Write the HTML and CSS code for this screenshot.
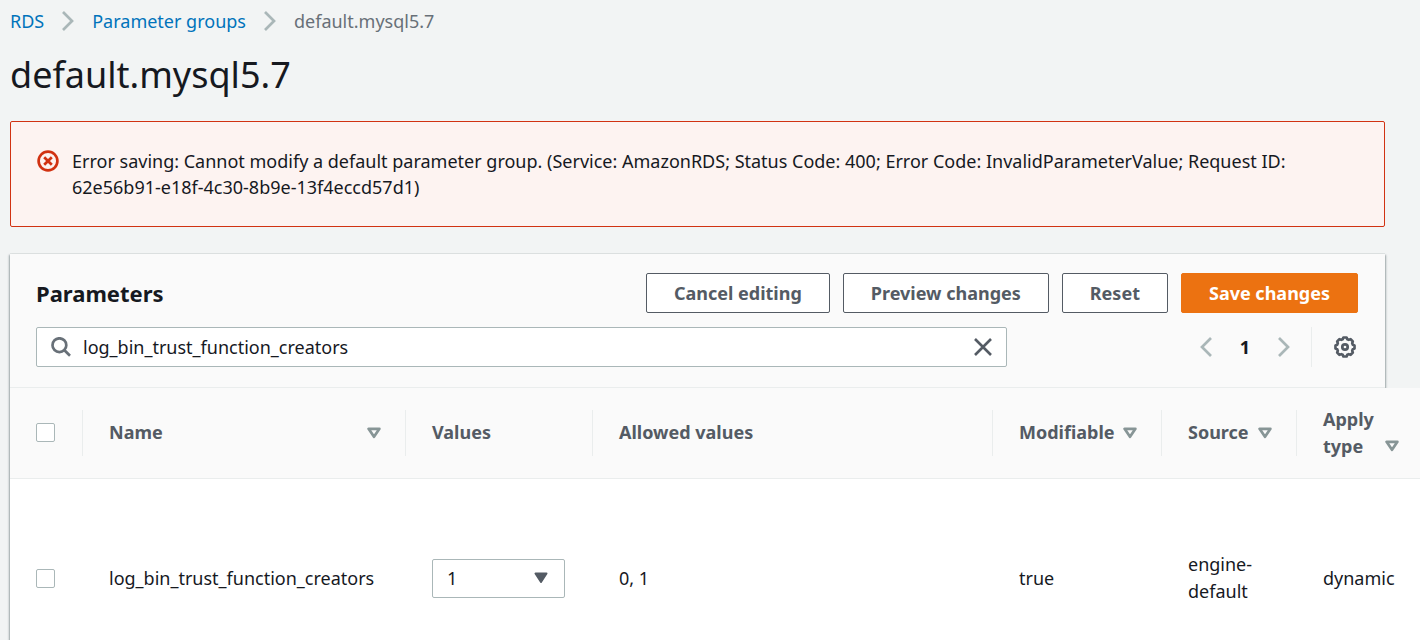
FILE: index.html
```html
<!DOCTYPE html>
<html lang="en">
<head>
<meta charset="utf-8">
<meta name="viewport" content="width=device-width, initial-scale=1">
<title>default.mysql5.7 - RDS parameter group</title>
<link rel="stylesheet" href="styles.css">
</head>
<body>
<svg class="sprite" aria-hidden="true">
  <symbol id="i-chevron" viewBox="0 0 14 22"><path d="M2 2 L11 11 L2 20" fill="none" stroke="currentColor" stroke-width="2.7"/></symbol>
  <symbol id="i-sort" viewBox="0 0 14 12"><path d="M1.6 1.8 H12.4 L7 9.8 Z" fill="none" stroke="currentColor" stroke-width="2.7" stroke-linejoin="round"/></symbol>
</svg>
<main class="page">
  <nav class="crumbs" aria-label="Breadcrumbs">
    <a class="crumb-link" href="#">RDS</a>
    <svg class="crumb-sep"><use href="#i-chevron"/></svg>
    <a class="crumb-link" href="#">Parameter groups</a>
    <svg class="crumb-sep"><use href="#i-chevron"/></svg>
    <span class="crumb-current">default.mysql5.7</span>
  </nav>
  <h1 class="title">default.mysql5.7</h1>

  <div class="alert" role="alert">
    <svg class="alert-icon" viewBox="0 0 22 22" fill="none" stroke="currentColor" stroke-width="2.7"><circle cx="11" cy="11" r="9.4"/><path d="M7.2 7.2 L14.8 14.8 M14.8 7.2 L7.2 14.8"/></svg>
    <p class="alert-text">Error saving: Cannot modify a default parameter group. (Service: AmazonRDS; Status Code: 400; Error Code: InvalidParameterValue; Request ID: 62e56b91-e18f-4c30-8b9e-13f4eccd57d1)</p>
  </div>

  <section class="panel">
    <header class="panel-head">
      <div class="head-row">
        <h2 class="panel-title">Parameters</h2>
        <div class="actions">
          <button class="btn" type="button">Cancel editing</button>
          <button class="btn" type="button">Preview changes</button>
          <button class="btn" type="button">Reset</button>
          <button class="btn btn-primary" type="button">Save changes</button>
        </div>
      </div>
      <div class="tools">
        <div class="search">
          <svg class="search-icon" viewBox="0 0 20 20" fill="none" stroke="currentColor" stroke-width="2.7"><circle cx="8.4" cy="8.2" r="6.9"/><path d="M13.2 13 L19 18.8"/></svg>
          <input class="search-input" type="text" aria-label="Filter parameters" value="log_bin_trust_function_creators">
          <button class="icon-btn" type="button" aria-label="Clear filter"><svg class="clear-icon" viewBox="0 0 18 18" fill="none" stroke="currentColor" stroke-width="2.6"><path d="M1 1 L17 17 M17 1 L1 17"/></svg></button>
        </div>
        <div class="pager">
          <button class="icon-btn page-arrow" type="button" aria-label="Previous page"><svg class="pager-icon flip"><use href="#i-chevron"/></svg></button>
          <button class="icon-btn page-num" type="button">1</button>
          <button class="icon-btn page-arrow" type="button" aria-label="Next page"><svg class="pager-icon"><use href="#i-chevron"/></svg></button>
        </div>
        <div class="prefs">
          <button class="icon-btn" type="button" aria-label="Preferences"><svg class="gear-icon" viewBox="0 0 22 22" fill="none" stroke="currentColor" stroke-width="2.7" stroke-linejoin="round"><path d="M9.4 1.5 H12.6 L13.3 3.2 L14.7 3.8 L16.6 3.2 L18.8 5.4 L18.2 7.3 L18.8 8.7 L20.5 9.4 V12.6 L18.8 13.3 L18.2 14.7 L18.8 16.6 L16.6 18.8 L14.7 18.2 L13.3 18.8 L12.6 20.5 H9.4 L8.7 18.8 L7.3 18.2 L5.4 18.8 L3.2 16.6 L3.8 14.7 L3.2 13.3 L1.5 12.6 V9.4 L3.2 8.7 L3.8 7.3 L3.2 5.4 L5.4 3.2 L7.3 3.8 L8.7 3.2 Z"/><circle cx="11" cy="11" r="2.7"/></svg></button>
        </div>
      </div>
    </header>
    <div class="table-wrap">
      <table class="params">
        <colgroup>
          <col class="c-check"><col class="c-name"><col class="c-values"><col class="c-allowed"><col class="c-mod"><col class="c-source"><col class="c-apply">
        </colgroup>
        <thead>
          <tr>
            <th scope="col"><div class="th check-cell"><input class="check" type="checkbox" aria-label="Select all parameters"></div></th>
            <th scope="col"><div class="th th-line spread">Name <svg class="sort"><use href="#i-sort"/></svg></div></th>
            <th scope="col"><div class="th th-line">Values</div></th>
            <th scope="col"><div class="th th-line">Allowed values</div></th>
            <th scope="col"><div class="th th-line spread">Modifiable <svg class="sort"><use href="#i-sort"/></svg></div></th>
            <th scope="col"><div class="th th-line spread">Source <svg class="sort"><use href="#i-sort"/></svg></div></th>
            <th scope="col"><div class="th th-line spread wrapped"><span>Apply type</span> <svg class="sort"><use href="#i-sort"/></svg></div></th>
          </tr>
        </thead>
        <tbody>
          <tr>
            <td class="td check-cell"><input class="check" type="checkbox" aria-label="Select log_bin_trust_function_creators"></td>
            <td class="td">log_bin_trust_function_creators</td>
            <td class="td"><select class="select" aria-label="Value"><option>1</option><option>0</option></select></td>
            <td class="td">0, 1</td>
            <td class="td">true</td>
            <td class="td">engine-default</td>
            <td class="td">dynamic</td>
          </tr>
        </tbody>
      </table>
    </div>
  </section>
</main>
</body>
</html>
```
FILE: styles.css
```css
* { box-sizing: border-box; }

body {
  margin: 0;
  min-height: 100vh;
  overflow-x: hidden;
  background: #f2f4f4;
  color: #16191f;
  font-family: "Noto Sans", "Open Sans", sans-serif;
  font-size: 18px;
  line-height: 26px;
}

button, input, select { font: inherit; color: inherit; }

.sprite { display: none; }

.page { padding: 8px 35px 0 10px; }

.crumbs { display: flex; align-items: center; }
.crumb-link { color: #0073bb; text-decoration: none; }
.crumb-sep { width: 14px; height: 22px; margin: 0 17px; color: #aab7b8; }
.crumb-current { color: #687078; }

.title {
  margin: 17px 0 22px;
  font-size: 36px;
  font-weight: 400;
  line-height: 48px;
}

.alert {
  display: flex;
  gap: 13px;
  padding: 26px 80px 26px 26px;
  border: 1px solid #d13212;
  border-radius: 2px;
  background: #fdf3f1;
}
.alert-icon { flex: none; width: 22px; height: 22px; margin-top: 2px; color: #d13212; }
.alert-text { margin: 0; }

.panel {
  margin-top: 27px;
  background: #fff;
  box-shadow: 0 1px 1px 0 rgba(0, 28, 36, .3), 1px 1px 2px 0 rgba(0, 28, 36, .3), -1px 1px 2px 0 rgba(0, 28, 36, .3), 0 -1px 0 0 #e5e9e9;
}
.panel-head {
  padding: 19px 27px 20px 26px;
  border-bottom: 1px solid #eaeded;
  background: #fafafa;
}
.head-row { display: flex; align-items: center; justify-content: space-between; }
.panel-title { margin: 0; font-size: 22px; line-height: 30px; font-weight: 700; }

.actions { display: flex; gap: 13px; }
.btn {
  height: 40px;
  padding: 0 27px;
  border: 1px solid #545b64;
  border-radius: 2px;
  background: #fff;
  color: #545b64;
  font-weight: 700;
}
.btn-primary { border-color: #ec7211; background: #ec7211; color: #fff; }

.tools { display: flex; align-items: center; margin-top: 14px; }
.search {
  flex: 1;
  display: flex;
  align-items: center;
  gap: 12px;
  height: 40px;
  padding: 0 14px;
  border: 1px solid #aab7b8;
  border-radius: 2px;
  background: #fff;
}
.search-icon { flex: none; width: 20px; height: 20px; color: #687078; }
.search-input {
  flex: 1;
  min-width: 0;
  padding: 0;
  border: 0;
  outline: 0;
  background: transparent;
}
.icon-btn {
  display: flex;
  align-items: center;
  justify-content: center;
  padding: 0;
  border: 0;
  background: none;
  color: #545b64;
}
.clear-icon { width: 18px; height: 18px; }

.pager { display: flex; align-items: center; gap: 27px; margin: 0 20px 0 192px; }
.page-arrow { color: #aab7b8; }
.pager-icon { width: 14px; height: 22px; }
.flip { transform: rotate(180deg); }
.page-num { color: #16191f; font-weight: 700; }
.prefs {
  display: flex;
  align-items: center;
  height: 40px;
  padding: 0 2px 0 22px;
  border-left: 1px solid #eaeded;
}
.gear-icon { width: 22px; height: 22px; }

.table-wrap { margin-right: -35px; background: #fff; }
.params { width: 100%; border-collapse: collapse; table-layout: fixed; line-height: 27px; }
.c-check { width: 72px; }
.c-name { width: 323px; }
.c-values { width: 187px; }
.c-mod { width: 169px; }
.c-source { width: 135px; }
.c-apply { width: 124px; }

th {
  padding: 0;
  height: 90px;
  border-bottom: 1px solid #eaeded;
  background: #fafafa;
  color: #545b64;
  font-weight: 700;
  text-align: left;
}
.th { display: flex; align-items: center; height: 46px; padding: 0 26px; }
.th-line { border-left: 1px solid #eaeded; }
.spread { justify-content: space-between; padding-right: 24px; }
.wrapped { padding-right: 21px; }
.sort { flex: none; width: 14px; height: 12px; color: #879596; }
.wrapped .sort { align-self: flex-end; margin-bottom: 4px; }

.td { height: 200px; padding: 0 27px; vertical-align: middle; }
.td.check-cell { padding: 0 26px; }

.check {
  appearance: none;
  display: block;
  flex: none;
  width: 19px;
  height: 19px;
  margin: 0;
  border: 1px solid #aab7b8;
  border-radius: 2px;
  background: #fff;
}

.select {
  appearance: none;
  display: block;
  width: 133px;
  height: 39px;
  padding: 0 14px;
  border: 1px solid #aab7b8;
  border-radius: 2px;
  background: #fff url("data:image/svg+xml,%3Csvg xmlns='http://www.w3.org/2000/svg' viewBox='0 0 14 12'%3E%3Cpath d='M1.5 1.5H12.5L7 10Z' fill='%23545b64' stroke='%23545b64' stroke-width='2' stroke-linejoin='round'/%3E%3C/svg%3E") no-repeat right 16px center / 14px 12px;
}
```
